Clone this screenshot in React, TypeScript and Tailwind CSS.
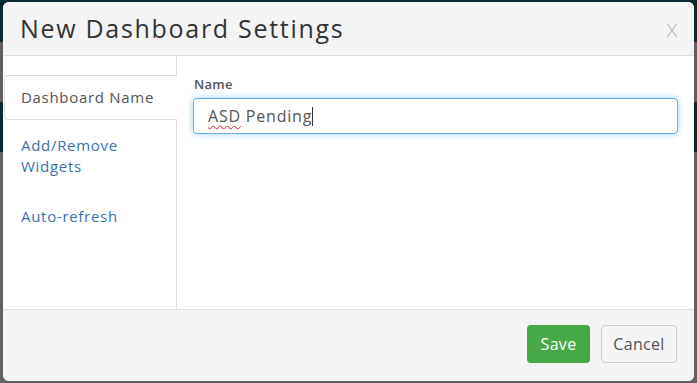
import type { ReactNode } from "react"

const font = { fontFamily: "'Open Sans', 'Liberation Sans', sans-serif" }

function NavItem({ children, active = false }: { children: ReactNode; active?: boolean }) {
  return (
    <div
      className={
        active
          ? "relative z-10 -mr-px ml-px rounded-l-[4px] border border-r-0 border-[#dddddd] bg-white py-[11px] pl-4 pr-3 text-[15px] leading-[21px] tracking-[0.7px] text-[#555555]"
          : "ml-px border border-transparent pb-[13px] pl-4 pr-3 pt-[14px] text-[15px] leading-[21px] tracking-[0.7px] text-[#3a72ad]"
      }
    >
      {children}
    </div>
  )
}

export default function App() {
  return (
    <div className="relative h-[383px] w-[697px] overflow-hidden bg-[#626262]" style={font}>
      {/* backdrop page showing through */}
      <div className="flex h-full flex-col">
        <div className="h-[42px] bg-[#0b2933]" />
        <div className="h-[60px] bg-[#5f5f5f]" />
        <div className="h-[50px] bg-[#0b2933]" />
        <div className="flex-1 bg-[#626262]" />
      </div>

      {/* modal */}
      <div className="absolute left-[3px] top-[2px] flex h-[379px] w-[691px] flex-col overflow-hidden rounded-[6px] bg-white">
        <div className="flex h-[54px] items-center justify-between border-b border-[#dddddd] bg-[#f4f4f4] pl-[17px] pr-[16px]">
          <h1 className="text-[25px] leading-none tracking-[1.7px] text-[#333333]">New Dashboard Settings</h1>
          <span className="-mt-[2px] text-[24px] font-light leading-none text-[#bbbbbb]">x</span>
        </div>

        <div className="flex h-[253px]">
          <div className="w-[174px] shrink-0 border-r border-[#dddddd] pt-[19px]">
            <NavItem active>Dashboard Name</NavItem>
            <NavItem>
              Add/Remove
              <br />
              Widgets
            </NavItem>
            <NavItem>Auto-refresh</NavItem>
          </div>

          <div className="flex-1 pl-4 pr-4 pt-[18px]">
            <label className="block pl-px text-[13px] font-semibold leading-[20px] tracking-[0.3px] text-[#555555]">Name</label>
            <div className="mt-[4px] flex h-[36px] items-center rounded-[4px] border border-[#66afe9] bg-white pl-[14px] text-[16px] tracking-[0.8px] text-[#555555] shadow-[0_0_6px_rgba(102,175,233,0.6)]">
              <span className="underline decoration-[#e02020] decoration-wavy decoration-1 underline-offset-[3px]">ASD</span>
              <span className="whitespace-pre"> Pending</span>
              <span className="h-[19px] w-px bg-[#333333]" />
            </div>
          </div>
        </div>

        <div className="flex flex-1 items-start justify-end gap-[11px] border-t border-[#dddddd] bg-[#f4f4f4] pr-[17px] pt-[15px]">
          <button className="h-[38px] w-[63px] rounded-[4px] bg-[#47a847] text-[16px] tracking-[0.3px] text-white">Save</button>
          <button className="h-[38px] w-[76px] rounded-[4px] border border-[#cccccc] bg-[#f4f4f4] text-[16px] tracking-[0.3px] text-[#555555]">
            Cancel
          </button>
        </div>
      </div>
    </div>
  )
}
